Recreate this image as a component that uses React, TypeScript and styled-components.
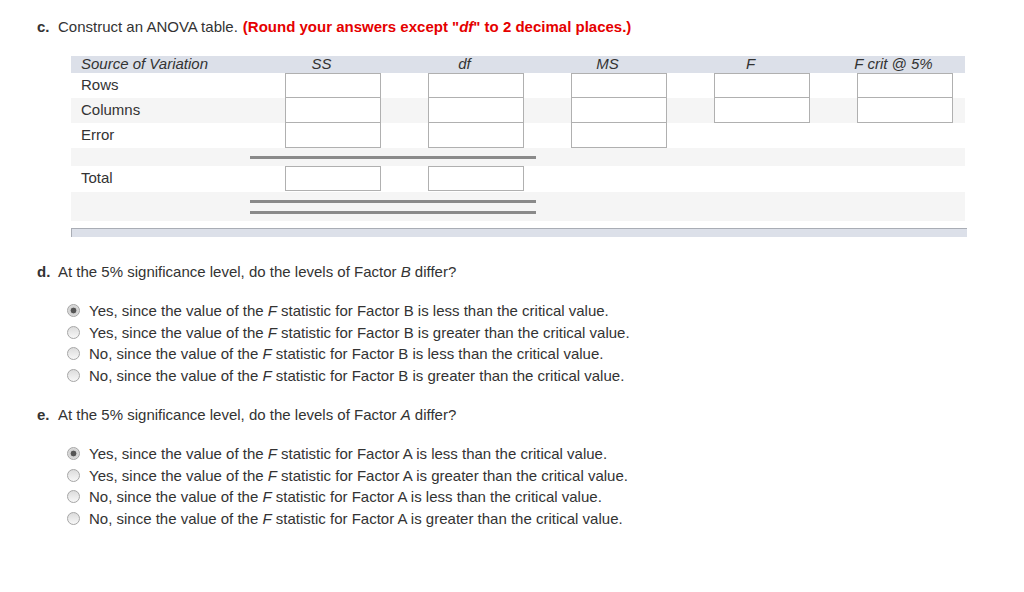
import React from "react";
import styled, { createGlobalStyle } from "styled-components";

const Global = createGlobalStyle`
  html, body { margin: 0; padding: 0; background: #fff; }
  body { font-family: "Liberation Sans", Arial, sans-serif; color: #333; }
  * { box-sizing: border-box; }
`;

const Page = styled.div`
  padding: 17px 0 0 37px;
  display: flex;
  flex-direction: column;
`;

const Heading = styled.div<{ $mt?: number }>`
  display: flex;
  font-size: 15px;
  line-height: 20px;
  margin-top: ${(p) => p.$mt ?? 0}px;
`;

const Letter = styled.b`
  width: 21px;
  flex: none;
`;

const Red = styled.span`
  color: #e50000;
  font-weight: bold;
  margin-left: 5px;
`;

const Table = styled.div`
  margin: 19px 0 0 34px;
  width: 894px;
  display: grid;
  grid-template-columns: 179px repeat(5, 143px);
`;

const HeadCell = styled.div<{ $left?: boolean }>`
  background: #dce0e9;
  height: 17px;
  line-height: 16px;
  font-style: italic;
  font-size: 15px;
  text-align: ${(p) => (p.$left ? "left" : "center")};
  padding-left: ${(p) => (p.$left ? 10 : 0)}px;
  color: #333;
`;

const Cell = styled.div<{ $shade?: boolean; $h: number }>`
  background: ${(p) => (p.$shade ? "#f5f5f5" : "#fff")};
  height: ${(p) => p.$h}px;
  display: flex;
  justify-content: flex-end;
  align-items: flex-start;
  padding-right: 12px;
`;

const LabelCell = styled.div<{ $shade?: boolean; $h: number }>`
  background: ${(p) => (p.$shade ? "#f5f5f5" : "#fff")};
  height: ${(p) => p.$h}px;
  line-height: 23px;
  font-size: 15px;
  padding-left: 10px;
  color: #333;
`;

const Input = styled.div<{ $top?: boolean }>`
  width: 96px;
  height: 25px;
  border: 1px solid #b0b0b0;
  border-top-width: ${(p) => (p.$top ? 1 : 0)}px;
  background: #fff;
`;

const RuleCell = styled.div<{ $h: number }>`
  grid-column: 2 / span 2;
  background: #f5f5f5;
  height: ${(p) => p.$h}px;
  display: flex;
  flex-direction: column;
  padding-top: 8px;
  gap: 8px;
`;

const Rule = styled.div`
  height: 3px;
  background: #8a8a8a;
`;

const Fill = styled.div<{ $span: number; $h: number; $shade?: boolean }>`
  grid-column: span ${(p) => p.$span};
  height: ${(p) => p.$h}px;
  background: ${(p) => (p.$shade ? "#f5f5f5" : "#fff")};
`;

const Bar = styled.div`
  margin: 7px 0 0 34px;
  width: 896px;
  height: 9px;
  background: #dce0e9;
  border-top: 1px solid #a9adb5;
  border-left: 1px solid #a9adb5;
`;

const Options = styled.div`
  margin: 18px 0 0 30px;
  display: flex;
  flex-direction: column;
`;

const Option = styled.label`
  display: flex;
  align-items: center;
  font-size: 15px;
  height: 21.5px;
  color: #333;
`;

const Radio = styled.span<{ $on?: boolean }>`
  width: 13px;
  height: 13px;
  border-radius: 50%;
  border: 1px solid #a6a6a6;
  background: ${(p) =>
    p.$on
      ? "radial-gradient(circle, #555 0 2.6px, #cfcfcf 3.2px, #ececec 100%)"
      : "linear-gradient(#dcdcdc, #f7f7f7)"};
  margin-right: 9px;
  flex: none;
`;

const cols = ["SS", "df", "MS", "F", "F crit @ 5%"];

type RowDef = { label: string; shade: boolean; count: number };

const rows: RowDef[] = [
  { label: "Rows", shade: false, count: 5 },
  { label: "Columns", shade: true, count: 5 },
  { label: "Error", shade: false, count: 3 },
];

const Question = ({ letter, factor }: { letter: string; factor: string }) => {
  const opts = [
    ["Yes", "less"],
    ["Yes", "greater"],
    ["No", "less"],
    ["No", "greater"],
  ];
  return (
    <>
      <Heading $mt={letter === "d." ? 25 : 19}>
        <Letter>{letter}</Letter>
        <span>
          At the 5% significance level, do the levels of Factor <i>{factor}</i> differ?
        </span>
      </Heading>
      <Options>
        {opts.map(([a, b], i) => (
          <Option key={i}>
            <Radio $on={i === 0} />
            <span>
              {a}, since the value of the <i>F</i> statistic for Factor {factor} is {b} than the
              critical value.
            </span>
          </Option>
        ))}
      </Options>
    </>
  );
};

export default function App() {
  return (
    <>
      <Global />
      <Page>
        <Heading>
          <Letter>c.</Letter>
          <span>
            Construct an ANOVA table.
            <Red>
              (Round your answers except "<i>df</i>" to 2 decimal places.)
            </Red>
          </span>
        </Heading>
        <Table>
          <HeadCell $left>Source of Variation</HeadCell>
          {cols.map((c) => (
            <HeadCell key={c}>{c}</HeadCell>
          ))}
          {rows.map((r, ri) => (
            <React.Fragment key={r.label}>
              <LabelCell $shade={r.shade} $h={25}>
                {r.label}
              </LabelCell>
              {cols.map((c, ci) => (
                <Cell key={c} $shade={r.shade} $h={25}>
                  {ci < r.count ? <Input $top={ri === 0} /> : null}
                </Cell>
              ))}
            </React.Fragment>
          ))}
          <Fill $span={1} $h={18} $shade />
          <RuleCell $h={18}>
            <Rule />
          </RuleCell>
          <Fill $span={3} $h={18} $shade />
          <LabelCell $h={26}>Total</LabelCell>
          <Cell $h={26}>
            <Input $top />
          </Cell>
          <Cell $h={26}>
            <Input $top />
          </Cell>
          <Fill $span={3} $h={26} />
          <Fill $span={1} $h={29} $shade />
          <RuleCell $h={29}>
            <Rule />
            <Rule />
          </RuleCell>
          <Fill $span={3} $h={29} $shade />
        </Table>
        <Bar />
        <Question letter="d." factor="B" />
        <Question letter="e." factor="A" />
      </Page>
    </>
  );
}
